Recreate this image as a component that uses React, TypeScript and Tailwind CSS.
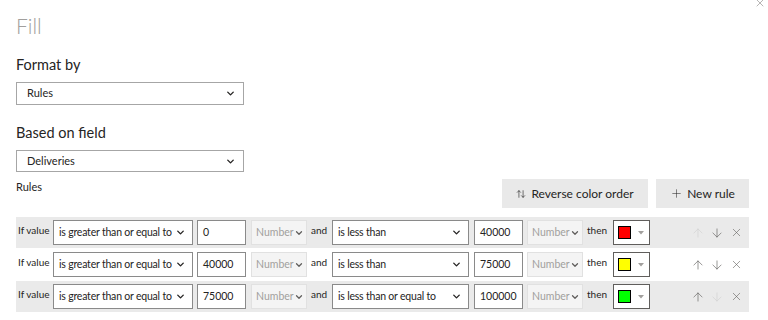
import React from "react";
import { ChevronDown, ArrowUp, ArrowDown, X, Plus, ArrowUpDown } from "lucide-react";

type Rule = {
  op1: string;
  v1: string;
  op2: string;
  v2: string;
  color: string;
  upOff?: boolean;
  downOff?: boolean;
  shaded: boolean;
};

const rules: Rule[] = [
  { op1: "is greater than or equal to", v1: "0", op2: "is less than", v2: "40000", color: "#ff0000", upOff: true, shaded: true },
  { op1: "is greater than or equal to", v1: "40000", op2: "is less than", v2: "75000", color: "#ffff00", shaded: false },
  { op1: "is greater than or equal to", v1: "75000", op2: "is less than or equal to", v2: "100000", color: "#00ff00", downOff: true, shaded: true },
];

function Select({ value, width }: { value: string; width: string }) {
  return (
    <div className={`${width} h-[25px] bg-white border border-[#8a8a8a] flex items-center justify-between pl-[5px] pr-[6px] text-[10.5px] tracking-[-0.2px] text-[#252423] whitespace-nowrap`}>
      <span>{value}</span>
      <ChevronDown size={11} strokeWidth={3} className="text-[#252423] shrink-0" />
    </div>
  );
}

function NumberSelect() {
  return (
    <div className="w-[56px] h-[25px] bg-[#f4f4f4] border border-[#e1e1e1] flex items-center justify-between pl-[4px] pr-[4px] text-[10.5px] text-[#a19f9d] whitespace-nowrap">
      <span>Number</span>
      <ChevronDown size={10} strokeWidth={3} className="text-[#605e5c] shrink-0" />
    </div>
  );
}

function RuleRow({ rule }: { rule: Rule }) {
  return (
    <div className={`h-[31px] flex items-center whitespace-nowrap ${rule.shaded ? "bg-[#eaeaea]" : "bg-white"}`}>
      <span className="ml-[2px] w-[35px] text-[10px] text-[#252423] -mt-[5px]">If value</span>
      <Select value={rule.op1} width="w-[140px]" />
      <div className="ml-[4px] w-[49px] h-[25px] bg-white border border-[#8a8a8a] flex items-center pl-[5px] text-[10.5px] text-[#252423]">
        {rule.v1}
      </div>
      <div className="ml-[5px]">
        <NumberSelect />
      </div>
      <span className="ml-[4px] w-[21px] text-[10px] text-[#252423] -mt-[5px]">and</span>
      <Select value={rule.op2} width="w-[137px]" />
      <div className="ml-[5px] w-[49px] h-[25px] bg-white border border-[#8a8a8a] flex items-center pl-[5px] text-[10.5px] text-[#252423]">
        {rule.v2}
      </div>
      <div className="ml-[4px]">
        <NumberSelect />
      </div>
      <span className="ml-[4px] w-[26px] text-[10px] text-[#252423] -mt-[5px]">then</span>
      <div className="w-[37px] h-[25px] bg-white border-[1.5px] border-[#605e5c] flex items-center pl-[4px] gap-[7px]">
        <div className="w-[13px] h-[13px] border border-black" style={{ backgroundColor: rule.color }} />
        <svg width="6" height="4" viewBox="0 0 6 4">
          <path d="M0 0h6L3 3.5z" fill="#a19f9d" />
        </svg>
      </div>
      <div className="ml-[41px] flex items-center gap-[5px]">
        <ArrowUp size={14} strokeWidth={1.1} className={rule.upOff ? "text-[#d0d0d0]" : "text-[#605e5c]"} />
        <ArrowDown size={14} strokeWidth={1.1} className={rule.downOff ? "text-[#d0d0d0]" : "text-[#605e5c]"} />
        <X size={13} strokeWidth={1.1} className="text-[#605e5c] ml-[1px]" />
      </div>
    </div>
  );
}

export default function App() {
  return (
    <div className="relative w-[768px] h-[320px] bg-white overflow-hidden font-['Lato',sans-serif] text-[#252423]">
      <X size={12} strokeWidth={1.25} className="absolute top-[-3px] left-[754px] text-[#8a8886]" />
      <div className="pl-4 pr-[19px] pt-[12px]">
        <div className="h-[28px] text-[21px] font-light text-[#a19f9d] leading-[28px]">Fill</div>

        <div className="mt-[14px] h-[22px] text-[14.5px] leading-[22px]">Format by</div>
        <div className="mt-[6px] w-[228px] h-[23px] border border-[#a6a6a6] flex items-center justify-between pl-[10px] pr-[7px] text-[11px]">
          <span>Rules</span>
          <ChevronDown size={11} strokeWidth={3} />
        </div>

        <div className="mt-[17px] h-[22px] text-[14.5px] leading-[22px]">Based on field</div>
        <div className="mt-[6px] w-[228px] h-[22px] border border-[#a6a6a6] flex items-center justify-between pl-[10px] pr-[7px] text-[11px]">
          <span>Deliveries</span>
          <ChevronDown size={11} strokeWidth={3} />
        </div>

        <div className="mt-[7px] flex items-start justify-between">
          <span className="text-[11px] leading-[16px]">Rules</span>
          <div className="flex gap-[8px]">
            <button className="w-[146px] h-[29px] bg-[#e9e9e9] flex items-center justify-center gap-[5px] text-[12px] text-[#252423]">
              <ArrowUpDown size={10} strokeWidth={1.5} />
              <span>Reverse color order</span>
            </button>
            <button className="w-[93px] h-[29px] bg-[#e9e9e9] flex items-center justify-center gap-[4px] text-[12px] text-[#252423]">
              <Plus size={13} strokeWidth={1} />
              <span>New rule</span>
            </button>
          </div>
        </div>

        <div className="mt-[9px] flex flex-col gap-[1px]">
          {rules.map((r, i) => (
            <RuleRow key={i} rule={r} />
          ))}
        </div>
      </div>
    </div>
  );
}
